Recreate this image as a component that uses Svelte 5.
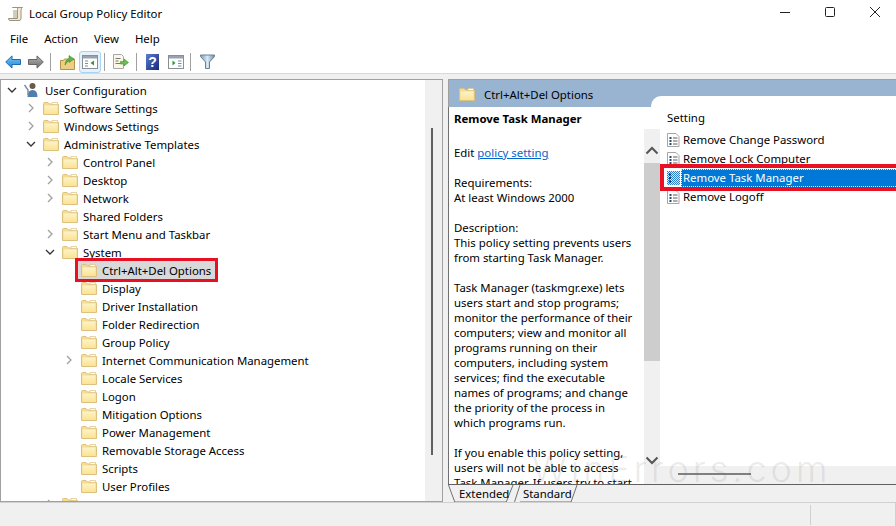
<script>
  // Tree rows: level sets the indent, arrow is 'open', 'closed' or none
  const tree = [
    { name: 'User Configuration', level: 0, arrow: 'open', root: true },
    { name: 'Software Settings', level: 1, arrow: 'closed' },
    { name: 'Windows Settings', level: 1, arrow: 'closed' },
    { name: 'Administrative Templates', level: 1, arrow: 'open' },
    { name: 'Control Panel', level: 2, arrow: 'closed' },
    { name: 'Desktop', level: 2, arrow: 'closed' },
    { name: 'Network', level: 2, arrow: 'closed' },
    { name: 'Shared Folders', level: 2 },
    { name: 'Start Menu and Taskbar', level: 2, arrow: 'closed' },
    { name: 'System', level: 2, arrow: 'open' },
    { name: 'Ctrl+Alt+Del Options', level: 3, selected: true },
    { name: 'Display', level: 3 },
    { name: 'Driver Installation', level: 3 },
    { name: 'Folder Redirection', level: 3 },
    { name: 'Group Policy', level: 3 },
    { name: 'Internet Communication Management', level: 3, arrow: 'closed' },
    { name: 'Locale Services', level: 3 },
    { name: 'Logon', level: 3 },
    { name: 'Mitigation Options', level: 3 },
    { name: 'Power Management', level: 3 },
    { name: 'Removable Storage Access', level: 3 },
    { name: 'Scripts', level: 3 },
    { name: 'User Profiles', level: 3 },
    { name: 'Windows Components', level: 2, arrow: 'closed' }
  ];

  const settings = [
    { name: 'Remove Change Password' },
    { name: 'Remove Lock Computer' },
    { name: 'Remove Task Manager', selected: true },
    { name: 'Remove Logoff' }
  ];

  const description = [
    'Requirements:',
    'At least Windows 2000',
    '',
    'Description:',
    'This policy setting prevents users',
    'from starting Task Manager.',
    '',
    'Task Manager (taskmgr.exe) lets',
    'users start and stop programs;',
    'monitor the performance of their',
    'computers; view and monitor all',
    'programs running on their',
    'computers, including system',
    'services; find the executable',
    'names of programs; and change',
    'the priority of the process in',
    'which programs run.',
    '',
    'If you enable this policy setting,',
    'users will not be able to access',
    'Task Manager. If users try to start'
  ];
</script>

{#snippet folder()}
  <svg class="folder" width="16" height="15" viewBox="0 0 16 15">
    <path d="M.5 13.500V2.500q0-1 1-1h3.500l1.500 1.500h8q1 0 1 1v9.500z" fill="#f6dc8e" stroke="#dcc27e" />
    <path d="M1.500 4.500h13v8.500h-13z" fill="url(#folder-fill)" />
    <path d="M9 1.500h5.500v2H9z" fill="#fff" stroke="#dcc27e" stroke-width=".7" />
  </svg>
{/snippet}

{#snippet policy(active)}
  <svg class="policy" width="15" height="16" viewBox="0 0 15 16">
    {#if active}
      <rect x="1" y="1" width="13" height="14" fill="url(#dither)" />
      <path d="M3 4.500h2M3 8h2M3 11.500h2" stroke="#1b3a66" stroke-width="2" />
    {:else}
      <path d="M1.500 1.500h8.500l3 3v10h-11.500z" fill="#fff" stroke="#a6a6a6" />
      <path d="M3.500 5h2v2h-2zM3.500 8h2v2h-2zM3.500 11h2v2h-2z" fill="#2f4a66" />
      <path d="M7 6h4.500M7 9h4.500M7 12h4.500" stroke="#5a5a5a" />
    {/if}
  </svg>
{/snippet}

<div class="window">
  <svg class="defs" width="0" height="0">
    <defs>
      <linearGradient id="folder-fill" x1="0" y1="0" x2="0" y2="1">
        <stop offset="0" stop-color="#fdf3c8" />
        <stop offset="1" stop-color="#fbe393" />
      </linearGradient>
      <linearGradient id="back-fill" x1="0" y1="0" x2="0" y2="1">
        <stop offset="0" stop-color="#7cc8f5" />
        <stop offset="1" stop-color="#1e86d8" />
      </linearGradient>
      <linearGradient id="next-fill" x1="0" y1="0" x2="0" y2="1">
        <stop offset="0" stop-color="#b4b4b4" />
        <stop offset="1" stop-color="#6e6e6e" />
      </linearGradient>
      <linearGradient id="help-fill" x1="0" y1="0" x2="1" y2="1">
        <stop offset="0" stop-color="#5a7fd0" />
        <stop offset="1" stop-color="#14287c" />
      </linearGradient>
      <linearGradient id="funnel-fill" x1="0" y1="0" x2="1" y2="0">
        <stop offset="0" stop-color="#7f9bb6" />
        <stop offset=".5" stop-color="#dce8f2" />
        <stop offset="1" stop-color="#6d8aa6" />
      </linearGradient>
      <pattern id="dither" width="2" height="2" patternUnits="userSpaceOnUse">
        <rect width="2" height="2" fill="#dbe9f6" />
        <rect width="1" height="1" fill="#2b7fcc" />
        <rect x="1" y="1" width="1" height="1" fill="#2b7fcc" />
      </pattern>
    </defs>
  </svg>

  <header class="titlebar">
    <svg class="app-icon" width="16" height="16" viewBox="0 0 16 16">
      <path d="M4.500 1.500h10q-1.500 1-1.500 3v8q0 2-2 2H2q-1.500 0-1.500-2h9V3.500q0-2 1-2z" fill="#f3ead0" stroke="#9b9280" />
      <path d="M5 5h5M5 7h5M5 9h5M5 11h4" stroke="#a39a80" />
    </svg>
    <span class="title">Local Group Policy Editor</span>
    <div class="caption">
      <svg width="10" height="10" viewBox="0 0 10 10"><path d="M0 5.500h10" stroke="#222" /></svg>
      <svg width="10" height="10" viewBox="0 0 10 10"><rect x=".5" y=".5" width="9" height="9" rx="1" fill="none" stroke="#222" /></svg>
      <svg width="10" height="10" viewBox="0 0 10 10"><path d="M0 0l10 10M10 0L0 10" stroke="#222" /></svg>
    </div>
  </header>

  <nav class="menubar">
    <span>File</span>
    <span>Action</span>
    <span>View</span>
    <span>Help</span>
  </nav>

  <div class="toolbar">
    <svg class="back" width="16" height="14" viewBox="0 0 16 14">
      <path d="M.7 7L7 .9v3.600h8.500v5H7v3.600z" fill="url(#back-fill)" stroke="#1f6db0" />
    </svg>
    <svg width="16" height="14" viewBox="0 0 16 14">
      <path d="M15.300 7L9 .9v3.600H.5v5H9v3.600z" fill="url(#next-fill)" stroke="#666" />
    </svg>
    <i class="sep"></i>
    <svg width="16" height="16" viewBox="0 0 16 16">
      <path d="M.5 15.500V6.500h3l1-1.500h10v10.500z" fill="#eccf83" stroke="#b3934a" />
      <path d="M5 11q0-5 4-6.500V1.500L14 5l-5 3.500V6.500q-2 1-4 4.500z" fill="#5db648" stroke="#3c8a32" stroke-width=".6" />
    </svg>
    <span class="tool-on">
      <svg width="16" height="14" viewBox="0 0 16 14">
        <rect x=".5" y=".5" width="15" height="13" fill="#fff" stroke="#8a8f96" />
        <rect x="1" y="1" width="14" height="2.500" fill="#9aa3ad" />
        <path d="M3 6h3M3 8.500h3M3 11h3" stroke="#6e8db0" />
        <path d="M12 5.500v5L8.500 8z" fill="#2f9a3a" />
      </svg>
    </span>
    <i class="sep"></i>
    <svg class="export" width="16" height="15" viewBox="0 0 16 15">
      <path d="M.5.500h8l2 2v12H.500z" fill="#fbf7e4" stroke="#a8a8a8" />
      <path d="M2.500 4.500h5M2.500 7h3M2.500 9.500h5" stroke="#777" />
      <path d="M7.500 7.500h3.500V5l4.500 3.500-4.500 3.500V10H7.500z" fill="#6cc04e" stroke="#3f8f33" stroke-width=".6" />
    </svg>
    <i class="sep"></i>
    <svg class="help" width="13" height="16" viewBox="0 0 13 16">
      <rect width="13" height="16" fill="url(#help-fill)" />
      <text x="6.500" y="13" text-anchor="middle" font-family="Liberation Sans, sans-serif" font-size="14" font-weight="700" fill="#fff">?</text>
    </svg>
    <svg width="16" height="14" viewBox="0 0 16 14">
      <rect x=".5" y=".5" width="15" height="13" fill="#fff" stroke="#8a8f96" />
      <rect x="1" y="1" width="14" height="2.500" fill="#9aa3ad" />
      <path d="M4.500 5.500v5L7.500 8z" fill="#2f9a3a" />
      <path d="M10 6h3.500M10 8.500h3.500M10 11h3.500" stroke="#6e8db0" />
    </svg>
    <i class="sep"></i>
    <svg width="15" height="15" viewBox="0 0 15 15">
      <path d="M.5 1h14v1.500L9.500 8v6.500h-4V8L.5 2.500z" fill="url(#funnel-fill)" stroke="#64809c" />
    </svg>
  </div>

  <main class="panes">
    <section class="tree-pane">
      <div class="tree">
        {#each tree as row}
          <div class="row" style="padding-left: {row.level * 19 + 6}px">
            <span class="arrow">
              {#if row.arrow === 'open'}
                <svg width="10" height="10" viewBox="0 0 10 10"><path d="M1 3l4 4 4-4" fill="none" stroke="#333" stroke-width="1.300" /></svg>
              {:else if row.arrow === 'closed'}
                <svg width="10" height="10" viewBox="0 0 10 10"><path d="M3 1l4 4-4 4" fill="none" stroke="#a0a0a0" stroke-width="1.300" /></svg>
              {/if}
            </span>
            <span class="node" class:picked={row.selected}>
              {#if row.root}
                <svg class="folder" width="16" height="16" viewBox="0 0 16 16">
                  <circle cx="8.500" cy="4" r="3" fill="#6b5a4a" />
                  <path d="M3.500 15q0-7 5-7t5 7z" fill="#4f7fb0" />
                  <path d="M.5 3l3.500 5v5" fill="none" stroke="#7a8fa3" stroke-width="1.500" />
                </svg>
              {:else}
                {@render folder()}
              {/if}
              <span class="label">{row.name}</span>
            </span>
          </div>
        {/each}
      </div>
      <div class="v-track">
        <div class="v-thumb"></div>
      </div>
    </section>

    <section class="detail-pane">
      <div class="detail-head">
        {@render folder()}
        <span>Ctrl+Alt+Del Options</span>
      </div>
      <div class="detail-body">
        <div class="extended">
          <h2>Remove Task Manager</h2>
          <p class="edit">Edit <a href="#policy">policy setting </a></p>
          <p class="blank"></p>
          {#each description as line}
            <p>{line}</p>
          {/each}
        </div>
        <div class="ext-scroll">
          <svg width="14" height="9" viewBox="0 0 14 9"><path d="M1.500 7.500L7 2l5.500 5.500" fill="none" stroke="#555" stroke-width="2" /></svg>
          <div class="ext-thumb"></div>
          <svg class="down" width="14" height="9" viewBox="0 0 14 9"><path d="M1.500 1.500L7 7l5.500-5.500" fill="none" stroke="#555" stroke-width="2" /></svg>
        </div>
        <div class="list">
          <div class="list-head">Setting</div>
          {#each settings as item}
            <div class="item" class:active={item.selected}>
              {@render policy(item.selected)}
              <span>{item.name}</span>
            </div>
          {/each}
          <div class="h-track">
            <div class="h-thumb"></div>
          </div>
        </div>
        <span class="watermark">WinErrors.com</span>
      </div>
      <div class="tabs">
        <span class="tab first">
          <svg viewBox="0 0 68 17" preserveAspectRatio="none"><path d="M.5 0l6.500 17h53L67 0" fill="#f0f0f0" stroke="#707070" /></svg>
          <span>Extended</span>
        </span>
        <span class="tab second">
          <svg viewBox="0 0 64 17" preserveAspectRatio="none"><path d="M.5 17L6 0M57 17h-51M57 17L63 0" fill="none" stroke="#707070" /></svg>
          <span>Standard</span>
        </span>
      </div>
    </section>
  </main>

  <footer class="statusbar">
    <i></i>
  </footer>
</div>

<style>
  :global(body) {
    margin: 0;
    background: #f0f0f0;
  }
  .window {
    position: relative;
    width: 896px;
    height: 526px;
    display: flex;
    flex-direction: column;
    overflow: hidden;
    font-family: "Noto Sans", sans-serif;
    font-size: 11.4px;
    color: #000;
  }
  .defs {
    position: absolute;
  }
  .titlebar {
    height: 27px;
    flex: none;
    display: flex;
    align-items: center;
    padding-left: 8px;
    background: #fff;
  }
  .title {
    margin-left: 5px;
  }
  .caption {
    margin-left: auto;
    display: flex;
    gap: 35px;
    padding-right: 16px;
    padding-bottom: 4px;
  }
  .menubar {
    height: 23px;
    flex: none;
    display: flex;
    gap: 16px;
    align-items: center;
    padding-left: 10px;
    background: #fff;
  }
  .toolbar {
    height: 24px;
    flex: none;
    display: flex;
    align-items: center;
    padding-left: 5px;
    background: #fff;
    border-bottom: 1px solid #d9d9d9;
    box-sizing: border-box;
  }
  .toolbar svg {
    flex: none;
  }
  .back {
    margin-right: 7px;
  }
  .sep {
    width: 1px;
    height: 18px;
    background: #a0a0a0;
    margin: 0 9px 0 6px;
  }
  .tool-on {
    width: 20px;
    height: 20px;
    margin-left: 3px;
    margin-right: -3px;
    display: flex;
    align-items: center;
    justify-content: center;
    background: #e5f1fb;
    border: 1px solid #a8d3f5;
    border-radius: 3px;
  }
  .export {
    margin-left: -1px;
    margin-right: 1px;
  }
  .help {
    margin-right: 9px;
  }
  .panes {
    flex: 1;
    min-height: 0;
    display: flex;
    padding-top: 5px;
    background: #f0f0f0;
  }
  .tree-pane {
    width: 443px;
    flex: none;
    box-sizing: border-box;
    display: flex;
    background: #fff;
    border: 1px solid #a0a0a0;
  }
  .tree {
    flex: 1;
    min-width: 0;
    overflow: hidden;
    padding-top: 1px;
  }
  .row {
    height: 18px;
    display: flex;
    align-items: center;
  }
  .arrow {
    width: 14px;
    height: 10px;
    display: flex;
    flex: none;
  }
  .node {
    height: 18px;
    display: flex;
    align-items: center;
    gap: 5px;
    padding: 0 4px 0 3px;
  }
  .node.picked {
    background: #d9d9d9;
    outline: 3px solid #e81123;
  }
  .folder {
    flex: none;
  }
  .label {
    white-space: nowrap;
  }
  .v-track {
    width: 17px;
    flex: none;
    background: #f0f0f0;
  }
  .v-thumb {
    width: 2px;
    height: 327px;
    margin: 48px 0 0 6px;
    background: #606060;
  }
  .detail-pane {
    flex: 1;
    min-width: 0;
    margin-left: 5px;
    display: flex;
    flex-direction: column;
  }
  .detail-head {
    height: 28px;
    flex: none;
    box-sizing: border-box;
    display: flex;
    align-items: center;
    gap: 9px;
    padding: 1px 0 0 10px;
    background: #99b4d1;
    border: 1px solid #a0a0a0;
    border-bottom: 0;
    border-right: 0;
  }
  .detail-body {
    position: relative;
    flex: 1;
    min-height: 0;
    display: flex;
    border-left: 1px solid #707070;
    border-bottom: 1px solid #606060;
    background: #fff;
  }
  .extended {
    width: 195px;
    flex: none;
    box-sizing: border-box;
    padding: 4px 0 0 5px;
    overflow: hidden;
    white-space: nowrap;
  }
  .extended h2 {
    margin: 0 0 19px;
    font-size: 11.4px;
    line-height: 15px;
    font-weight: 700;
  }
  .extended p {
    margin: 0;
    height: 15px;
    line-height: 15px;
  }
  .extended a {
    color: #0066cc;
    text-decoration: underline;
  }
  .ext-scroll {
    position: relative;
    z-index: 1;
    width: 16px;
    flex: none;
    margin-top: 22px;
    display: flex;
    flex-direction: column;
    align-items: center;
    background: #f0f0f0;
  }
  .ext-scroll svg {
    margin-top: 17px;
  }
  .ext-thumb {
    width: 16px;
    height: 198px;
    margin-top: 8px;
    background: #cdcdcd;
  }
  .ext-scroll .down {
    margin-top: auto;
    margin-bottom: 19px;
  }
  .list {
    position: relative;
    flex: 1;
    min-width: 0;
    background: #fff;
    border-radius: 10px 0 0 0;
    margin: -11px 0 0 -9px;
    padding: 13px 0 0 15px;
  }
  .list-head {
    height: 21px;
    line-height: 17px;
    padding-left: 1px;
  }
  .item {
    height: 19px;
    display: flex;
    align-items: center;
    margin-right: -6px;
  }
  .item svg {
    flex: none;
  }
  .item span {
    flex: 1;
    height: 18px;
    line-height: 18px;
    padding-left: 2px;
  }
  .item.active {
    margin-left: -2px;
    padding-left: 2px;
    outline: 4px solid #e81123;
  }
  .item.active span {
    background: #0078d7;
    color: #fff;
    outline: 1px dotted #ffe9b0;
    outline-offset: -1px;
  }
  .h-track {
    position: absolute;
    left: 0;
    right: 0;
    bottom: 0;
    height: 18px;
    background: #f0f0f0;
  }
  .h-thumb {
    position: absolute;
    left: 27px;
    top: 7px;
    width: 73px;
    height: 2px;
    background: #808080;
  }
  .watermark {
    position: absolute;
    z-index: 2;
    left: 83px;
    bottom: -7px;
    font-family: Inter, sans-serif;
    font-weight: 300;
    font-size: 36px;
    letter-spacing: 4px;
    color: rgba(110, 110, 110, .15);
    white-space: nowrap;
    pointer-events: none;
  }
  .tabs {
    height: 17px;
    flex: none;
    display: flex;
  }
  .tab {
    position: relative;
    display: block;
    line-height: 17px;
  }
  .tab svg {
    position: absolute;
    inset: 0;
    width: 100%;
    height: 100%;
  }
  .tab span {
    position: relative;
  }
  .tab.first {
    width: 66px;
    padding-left: 11px;
    box-sizing: border-box;
  }
  .tab.second {
    width: 64px;
    padding-left: 9px;
    box-sizing: border-box;
  }
  .statusbar {
    height: 24px;
    flex: none;
    box-sizing: border-box;
    background: #f0f0f0;
    border-top: 1px solid #d0d0d0;
    border-right: 1px solid #d0d0d0;
    display: flex;
    justify-content: flex-end;
  }
  .statusbar i {
    width: 1px;
    height: 20px;
    margin: 2px 84px 0 0;
    background: #d0d0d0;
  }
</style>
